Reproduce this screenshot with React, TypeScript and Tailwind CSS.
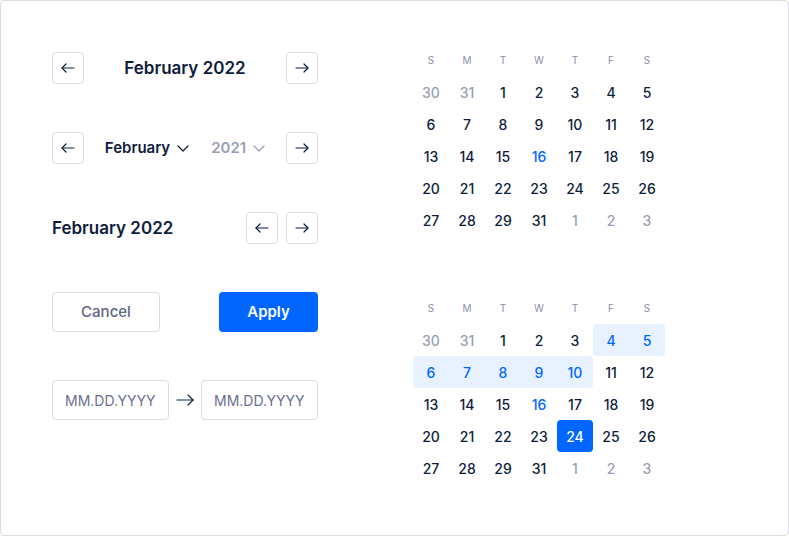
import type { ReactNode } from 'react'

const font = { fontFamily: 'Inter, "Noto Sans", sans-serif' }

function Arrow({ dir }: { dir: 'left' | 'right' }) {
  return (
    <svg width="14" height="10" viewBox="0 0 14 10" fill="none" stroke="#0f1d3c" strokeWidth="1.2" strokeLinecap="round" strokeLinejoin="round">
      {dir === 'left' ? (
        <>
          <path d="M13 5H1" />
          <path d="M5 1L1 5l4 4" />
        </>
      ) : (
        <>
          <path d="M1 5h12" />
          <path d="M9 1l4 4-4 4" />
        </>
      )}
    </svg>
  )
}

function Chevron({ color }: { color: string }) {
  return (
    <svg width="12" height="7" viewBox="0 0 12 7" fill="none" stroke={color} strokeWidth="1.2" strokeLinecap="round" strokeLinejoin="round">
      <path d="M1 1l5 5 5-5" />
    </svg>
  )
}

function NavBtn({ dir }: { dir: 'left' | 'right' }) {
  return (
    <button className="flex h-8 w-8 shrink-0 items-center justify-center rounded border border-[#dcdde8] bg-white">
      <Arrow dir={dir} />
    </button>
  )
}

type Day = { n: number; muted?: boolean; today?: boolean; range?: boolean; selected?: boolean }

const weekdays = ['S', 'M', 'T', 'W', 'T', 'F', 'S']

function buildDays(withRange: boolean): Day[] {
  const days: Day[] = [{ n: 30, muted: true }, { n: 31, muted: true }]
  for (let i = 1; i <= 29; i++) days.push({ n: i, today: i === 16 })
  days.push({ n: 31 })
  days.push({ n: 1, muted: true }, { n: 2, muted: true }, { n: 3, muted: true })
  if (withRange) {
    days.forEach((d) => {
      if (!d.muted && d.n >= 4 && d.n <= 10) d.range = true
      if (!d.muted && d.n === 24) d.selected = true
    })
  }
  return days
}

function Calendar({ withRange }: { withRange?: boolean }) {
  const days = buildDays(!!withRange)
  return (
    <div className="w-[252px]">
      <div className="grid grid-cols-7">
        {weekdays.map((w, i) => (
          <div key={i} className="flex h-4 items-center justify-center text-[10px] text-[#8c91a9]">
            {w}
          </div>
        ))}
      </div>
      <div className="mt-2 grid grid-cols-7">
        {days.map((d, i) => {
          const col = i % 7
          const prev = days[i - 1]
          const next = days[i + 1]
          const leftRound = d.range && (col === 0 || !prev?.range)
          const rightRound = d.range && (col === 6 || !next?.range)
          let cls = 'flex h-8 items-center justify-center text-[14px] font-medium '
          if (d.selected) cls += 'rounded bg-[#0066ff] text-white'
          else if (d.range) cls += 'bg-[#e8f1ff] text-[#0066ff]'
          else if (d.muted) cls += 'text-[#9a9fb5]'
          else if (d.today) cls += 'text-[#0066ff]'
          else cls += 'text-[#0f1d3c]'
          if (leftRound) cls += ' rounded-l'
          if (rightRound) cls += ' rounded-r'
          return (
            <div key={i} className={cls}>
              {d.n}
            </div>
          )
        })}
      </div>
    </div>
  )
}

function Row({ children, className = '' }: { children: ReactNode; className?: string }) {
  return <div className={'flex items-center ' + className}>{children}</div>
}

export default function App() {
  return (
    <div className="h-[536px] w-[789px] bg-white" style={font}>
      <div className="flex h-full w-full rounded border border-[#dcdce8] pl-[51px] pt-[51px]">
        <div className="flex w-[266px] flex-col gap-12">
          <Row className="justify-between">
            <NavBtn dir="left" />
            <span className="pt-[2px] text-[17px] font-semibold text-[#0f1d3c]">February 2022</span>
            <NavBtn dir="right" />
          </Row>
          <Row className="justify-between">
            <NavBtn dir="left" />
            <div className="flex items-center gap-[22px]">
              <span className="flex items-center gap-[7px] text-[15px] font-semibold text-[#0f1d3c]">
                February <Chevron color="#0f1d3c" />
              </span>
              <span className="flex items-center gap-[7px] text-[15px] font-semibold text-[#9a9fb5]">
                2021 <Chevron color="#9a9fb5" />
              </span>
            </div>
            <NavBtn dir="right" />
          </Row>
          <Row className="justify-between">
            <span className="pt-[2px] text-[17px] font-semibold text-[#0f1d3c]">February 2022</span>
            <div className="flex gap-2">
              <NavBtn dir="left" />
              <NavBtn dir="right" />
            </div>
          </Row>
          <Row className="justify-between">
            <button className="h-10 w-[108px] rounded border border-[#dcdde8] bg-white text-[15px] font-medium text-[#5f6583]">
              Cancel
            </button>
            <button className="h-10 w-[99px] rounded bg-[#0066ff] text-[15px] font-semibold text-white">
              Apply
            </button>
          </Row>
          <Row className="justify-between">
            <div className="flex h-10 w-[117px] items-center rounded border border-[#dcdde8] pl-3 text-[14px] text-[#6b7090]">
              MM.DD.YYYY
            </div>
            <svg width="18" height="12" viewBox="0 0 18 12" fill="none" stroke="#0f1d3c" strokeWidth="1.2" strokeLinecap="round" strokeLinejoin="round">
              <path d="M1 6h16" />
              <path d="M12 1l5 5-5 5" />
            </svg>
            <div className="flex h-10 w-[117px] items-center rounded border border-[#dcdde8] pl-3 text-[14px] text-[#6b7090]">
              MM.DD.YYYY
            </div>
          </Row>
        </div>
        <div className="ml-[95px] flex flex-col gap-16">
          <Calendar />
          <Calendar withRange />
        </div>
      </div>
    </div>
  )
}
